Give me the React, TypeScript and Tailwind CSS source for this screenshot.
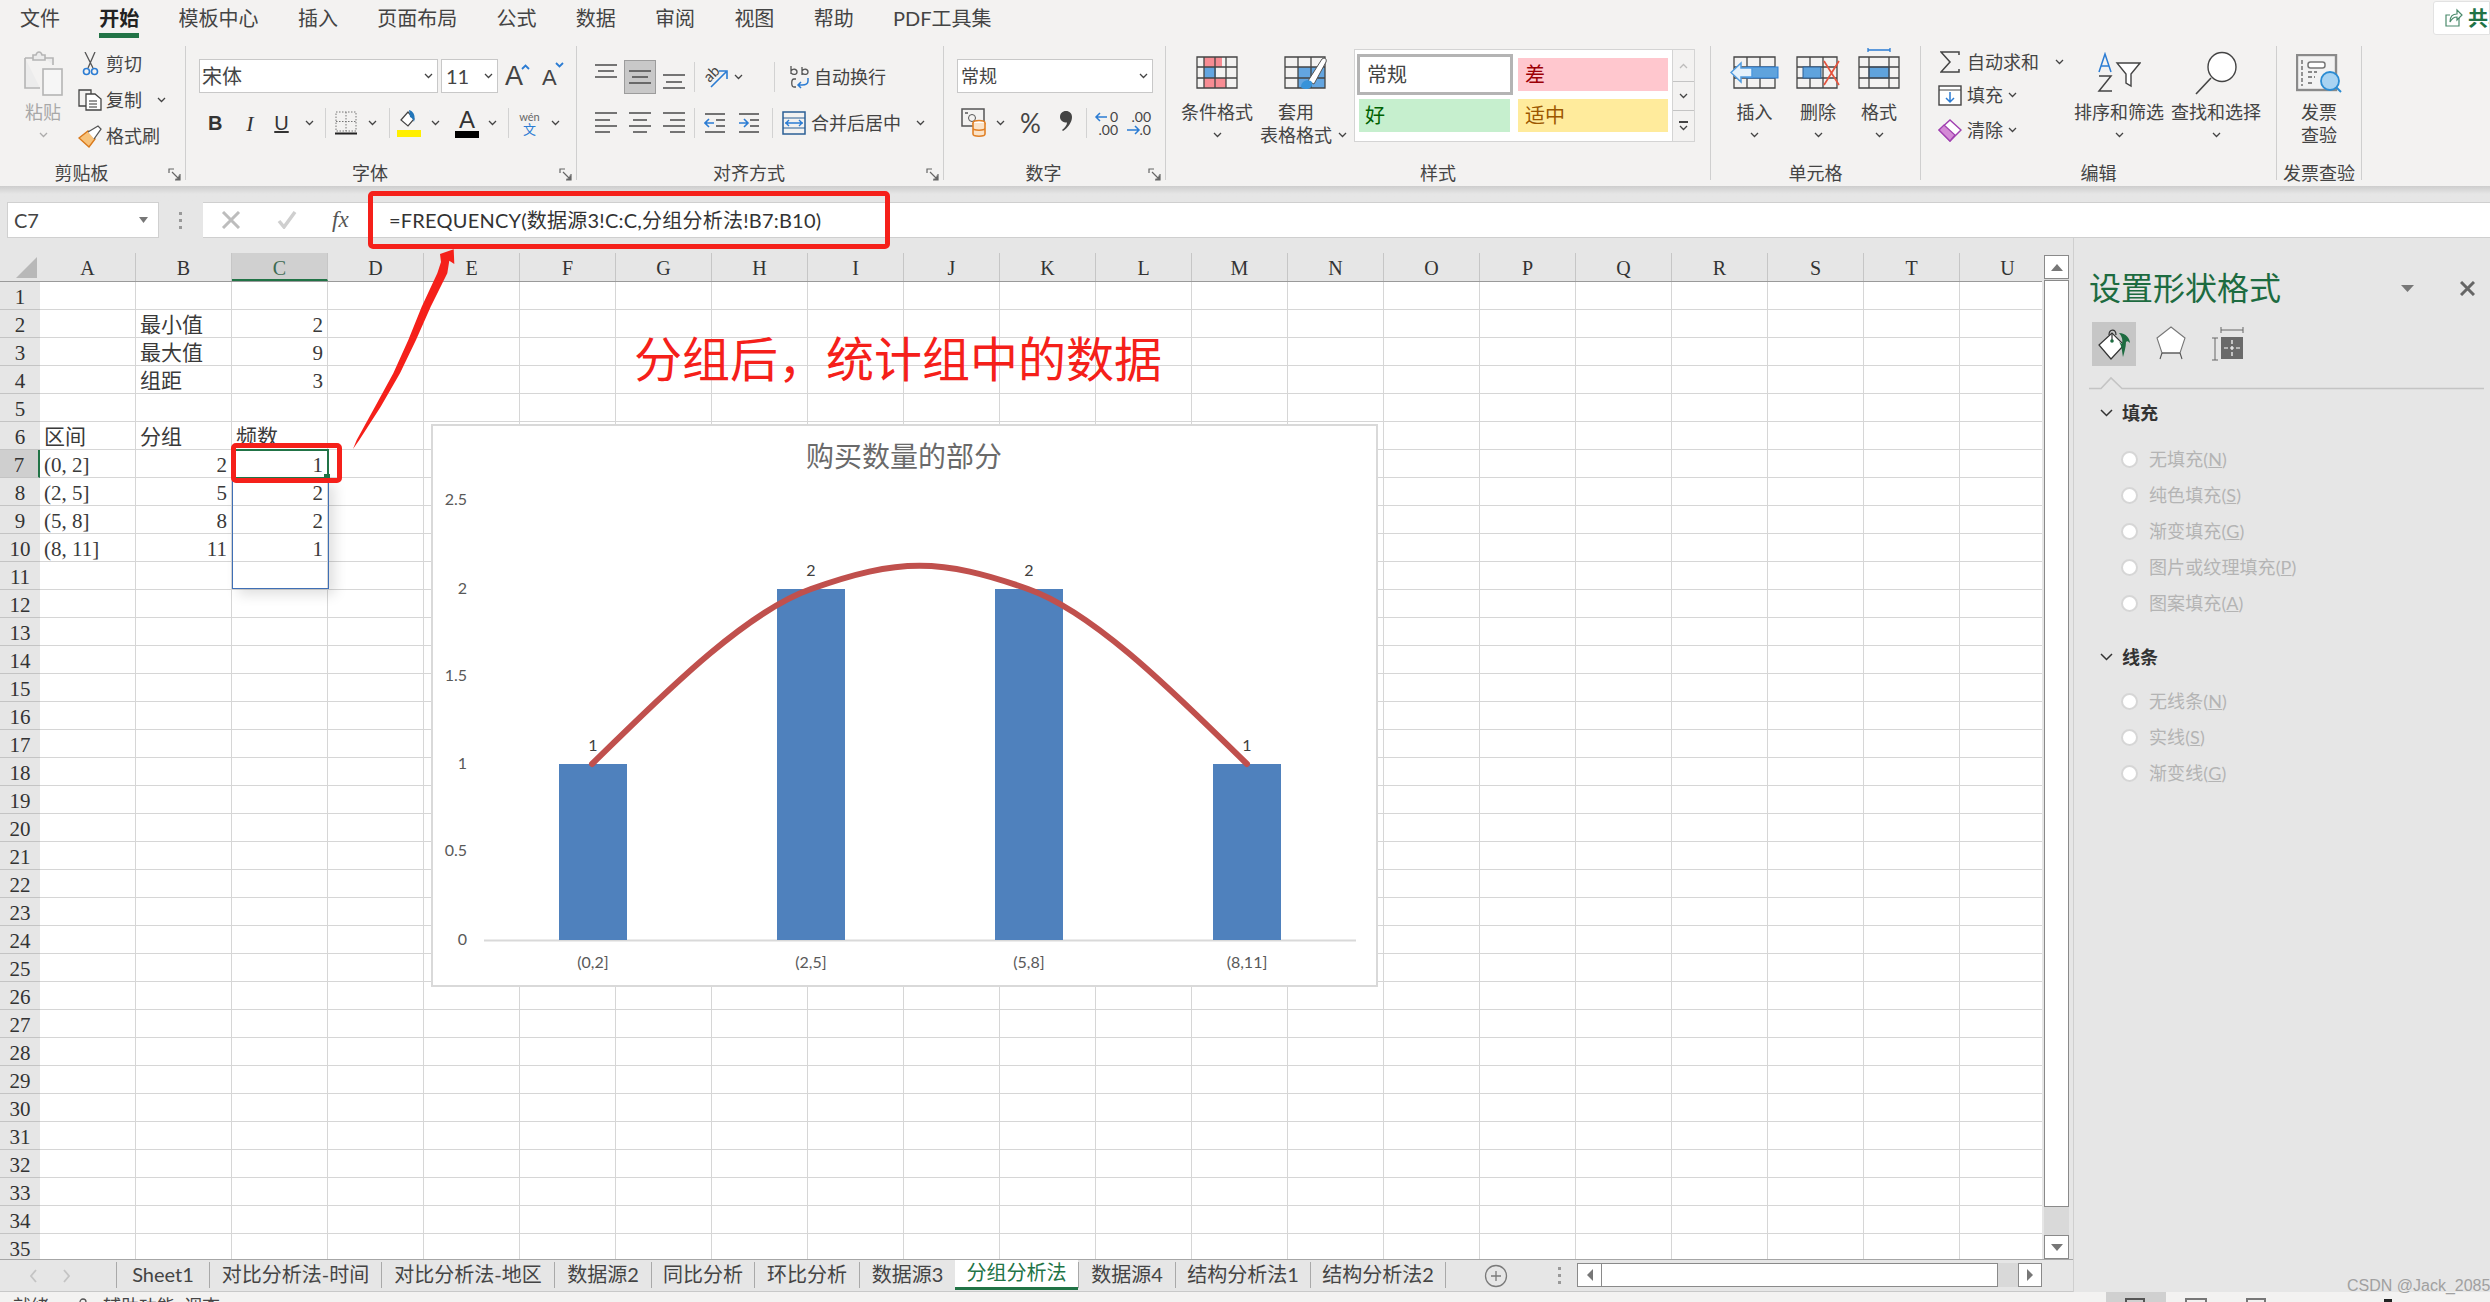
import React from 'react';

const Chev = ({ className = '' }: { className?: string }) => (
  <svg width="9" height="6" viewBox="0 0 9 6" fill="none" stroke="#444" strokeWidth="1.3" className={`shrink-0 ${className}`}><path d="M1 1l3.5 3.5L8 1" /></svg>
);
const Sep = ({ className = '' }: { className?: string }) => <div className={`w-px h-[30px] bg-[#d2d2d2] shrink-0 ${className}`} />;

const Launcher = () => (
  <svg width="13" height="13" viewBox="0 0 13 13" fill="none" stroke="#666" strokeWidth="1.2" className="absolute right-[4px] top-[5px]">
    <path d="M1 5V1h5M12 6v6H7M4 4l7 7M7.5 11H11V7.5" />
  </svg>
);

function Group({ w, label, launcher, children }: { w: string; label: string; launcher?: boolean; children?: React.ReactNode }) {
  return (
    <div className={`${w} h-[134px] border-r border-[#cfcfcf] flex flex-col shrink-0`}>
      <div className="h-[117px] shrink-0">{children}</div>
      <div className={`relative h-[20px] text-center text-[18px] leading-[20px] ${launcher ? 'pr-[22px]' : ''}`}>
        {label}
        {launcher && <Launcher />}
      </div>
    </div>
  );
}

function BigCol({ icon, lines, className = '', pb = 'pb-[11px]', chevInline }: { icon: React.ReactNode; lines: string[]; className?: string; pb?: string; chevInline?: boolean }) {
  return (
    <div className={`flex flex-col items-center shrink-0 ${className}`}>
      <div className={`h-[54px] flex items-end justify-center ${pb}`}>{icon}</div>
      <div className="h-[24px] text-[18px] leading-[24px] whitespace-nowrap">{lines[0]}</div>
      {lines[1] ? (
        <div className="h-[22px] text-[18px] leading-[22px] whitespace-nowrap flex items-center">
          {lines[1]}
          {chevInline && <Chev className="ml-[6px]" />}
        </div>
      ) : (
        <div className="h-[22px] flex items-center"><Chev /></div>
      )}
    </div>
  );
}

const PasteIcon = () => (
  <svg width="42" height="46" viewBox="0 0 42 46" fill="none" stroke="#b5b5b5" strokeWidth="1.6">
    <path d="M3 7h8M23 7h8V14M3 7v30h15" fill="#ececec" />
    <path d="M11 9V4h3c1-4 5-4 6 0h3v5z" fill="#ececec" />
    <rect x="21" y="18" width="19" height="26" fill="#f6f6f6" />
  </svg>
);
const CutIcon = () => (
  <svg width="17" height="24" viewBox="0 0 17 24" fill="none" strokeWidth="1.3">
    <path d="M3 0l8 16M13 0L6 16" stroke="#555" />
    <circle cx="4.5" cy="19.5" r="3" stroke="#2b7cd3" strokeWidth="1.6" />
    <circle cx="12.5" cy="19.5" r="3" stroke="#2b7cd3" strokeWidth="1.6" />
  </svg>
);
const CopyIcon = () => (
  <svg width="25" height="22" viewBox="0 0 25 22" fill="none" stroke="#444" strokeWidth="1.3">
    <path d="M8 17H1V1h12v4" />
    <path d="M8 5h9l6 5v11H8z" fill="#fff" />
    <path d="M11 12h8M11 15h8M11 18h8" stroke="#777" />
  </svg>
);
const BrushIcon = () => (
  <svg width="25" height="23" viewBox="0 0 25 23" fill="none">
    <path d="M1 13l9-7 7 8-6 8z" fill="#f7c27a" stroke="#d9791b" strokeWidth="1.4" />
    <path d="M10 7l10-6 3 3-7 10" fill="#fff" stroke="#555" strokeWidth="1.3" />
  </svg>
);
const BorderIcon = () => (
  <svg width="22" height="24" viewBox="0 0 22 24" fill="none">
    <rect x="1" y="1" width="20" height="19" stroke="#777" strokeDasharray="1.5 1.5" />
    <path d="M11 1v19M1 10.5h20" stroke="#777" strokeDasharray="1.5 1.5" />
    <path d="M0 22.5h22" stroke="#222" strokeWidth="2" />
  </svg>
);
const FillIcon = () => (
  <div className="w-[24px] flex flex-col items-center">
    <svg width="20" height="20" viewBox="0 0 20 20" fill="none">
      <path d="M2 11l7-8 6 7-6 7z" fill="#fff" stroke="#444" strokeWidth="1.2" />
      <path d="M10 1c4 1 7 5 5 12-1-3-2-4-4-5z" fill="#2276b9" />
    </svg>
    <div className="w-[24px] h-[7px] mt-px bg-[#ffef00]" />
  </div>
);
const FontColor = () => (
  <div className="w-[24px] flex flex-col items-center">
    <span className="text-[24px] leading-[22px] text-[#333] font-['Liberation_Sans']">A</span>
    <div className="w-[24px] h-[7px] bg-black" />
  </div>
);
const AL = ({ ys, x }: { ys: number[]; x: number[][] }) => (
  <svg width="22" height="26" viewBox="0 0 22 26" fill="none" stroke="#4a4a4a" strokeWidth="1.5" className="shrink-0">
    {ys.map((y, i) => <path key={i} d={`M${x[i][0]} ${y}H${x[i][1]}`} />)}
  </svg>
);
const V3 = [[0, 22], [3, 19], [0, 22]];
const OrientIcon = () => (
  <svg width="25" height="26" viewBox="0 0 25 26" fill="none" className="shrink-0">
    <text x="1" y="16" fontSize="15" fill="#444" transform="rotate(-45 7 12)">ab</text>
    <path d="M7 23L22 8M15 7h8v8" stroke="#2b7cd3" strokeWidth="1.6" />
  </svg>
);
const WrapIcon = () => (
  <svg width="22" height="24" viewBox="0 0 22 24" fill="none" className="shrink-0">
    <path d="M3 9V1M3 6c2-3 6-2 6 1s-4 3-6 1M14 2v8M14 6c2-3 6-2 6 1s-4 3-6 1" stroke="#555" strokeWidth="1.3" />
    <path d="M8 14h-2c-3 0-3 8 0 8h2" stroke="#555" strokeWidth="1.3" />
    <path d="M20 13v3c0 3-3 4-6 4h-4M13 17l-3 3 3 3" stroke="#2b7cd3" strokeWidth="1.5" />
  </svg>
);
const IndentIcon = ({ flip }: { flip?: boolean }) => (
  <svg width="22" height="22" viewBox="0 0 22 22" fill="none" className="shrink-0">
    <path d="M1 2h20M1 20h20M12 8h9M12 14h9" stroke="#4a4a4a" strokeWidth="1.5" />
    <path d={flip ? 'M1 11h8M6 7l4 4-4 4' : 'M10 11H2M5 7l-4 4 4 4'} stroke="#2b7cd3" strokeWidth="1.6" />
  </svg>
);
const MergeIcon = () => (
  <svg width="24" height="24" viewBox="0 0 24 24" fill="none" className="shrink-0">
    <rect x="1" y="1" width="22" height="22" stroke="#2b5f95" strokeWidth="1.5" />
    <path d="M1 7h22M1 17h22" stroke="#2b5f95" strokeWidth="1.2" />
    <path d="M3 12h18M7 9l-3 3 3 3M17 9l3 3-3 3" stroke="#2b7cd3" strokeWidth="1.4" />
  </svg>
);
const CurrencyIcon = () => (
  <svg width="25" height="30" viewBox="0 0 25 30" fill="none" className="shrink-0">
    <rect x="1" y="1" width="22" height="17" stroke="#555" strokeWidth="1.5" />
    <path d="M4 5h3M16 14h3" stroke="#555" strokeWidth="1.3" />
    <circle cx="11" cy="10" r="3.5" stroke="#555" />
    <ellipse cx="18" cy="15" rx="6" ry="2.5" fill="#fff" stroke="#e08026" strokeWidth="1.6" />
    <path d="M12 15v11c0 3 12 3 12 0V15M12 20c0 3 12 3 12 0" fill="#fbe3c8" stroke="#e08026" strokeWidth="1.6" />
  </svg>
);
const CommaIcon = () => (
  <svg width="12" height="20" viewBox="0 0 12 20" className="shrink-0">
    <path d="M6 0c3.500 0 6 2.500 6 6 0 5-4 11-9 14l-1-1c3-2.500 5-5 5-7.500C3 11.500 0 9.500 0 6c0-3.500 2.500-6 6-6z" fill="#444" />
  </svg>
);
const DecIcon = ({ inc }: { inc?: boolean }) => (
  <div className="relative w-[24px] h-[26px] shrink-0 text-[14px] leading-[13px] text-[#444] font-['Lato',sans-serif]">
    <div className="text-right">{inc ? '0' : '.00'}</div>
    <div className="text-right">{inc ? '.00' : '.0'}</div>
    <svg width="14" height="10" viewBox="0 0 14 10" fill="none" stroke="#2b7cd3" strokeWidth="1.5" className={`absolute left-0 ${inc ? 'top-[2px]' : 'top-[15px]'}`}>
      {inc ? <path d="M13 5H2M6 1L2 5l4 4" /> : <path d="M0 5h11M8 1l4 4-4 4" />}
    </svg>
  </div>
);
const CondIcon = () => (
  <svg width="42" height="33" viewBox="0 0 42 33" fill="none">
    <rect x="8" y="1" width="18" height="10" fill="#f78c93" />
    <rect x="8" y="11" width="12" height="11" fill="#63a5e0" />
    <rect x="8" y="22" width="22" height="10" fill="#f78c93" />
    <path d="M1 1h40v31H1zM8 1v31M19 1v31M30 1v31M1 11h40M1 22h40" stroke="#444" strokeWidth="1.3" />
  </svg>
);
const TableIcon = () => (
  <svg width="44" height="33" viewBox="0 0 44 33" fill="none">
    <rect x="14" y="11" width="27" height="21" fill="#63a5e0" />
    <path d="M1 1h40v31H1zM14 1v31M27 1v31M1 11h40M1 22h40" stroke="#444" strokeWidth="1.3" />
    <path d="M24 25L38 3c3-2 5 0 4 3L30 28z" fill="#fff" stroke="#555" />
    <path d="M17 31c0-6 6-8 10-6 3 3 0 8-4 8-2 0-5 0-6-2z" fill="#3793d9" />
  </svg>
);
const InsertIcon = () => (
  <svg width="49" height="33" viewBox="0 0 49 33" fill="none">
    <path d="M4 1h41v31H4zM17 1v31M30 1v31M4 11h41M4 22h41" stroke="#444" strokeWidth="1.3" />
    <rect x="16" y="11" width="32" height="11" fill="#5fa3dd" stroke="#2b7cd3" />
    <path d="M1 16.500L11 7v5h11v9H11v5z" fill="#e5f1fb" stroke="#4f9be0" strokeWidth="1.5" />
  </svg>
);
const DeleteIcon = () => (
  <svg width="44" height="33" viewBox="0 0 44 33" fill="none">
    <path d="M1 1h40v31H1zM14 1v31M27 1v31M1 11h40M1 22h40" stroke="#444" strokeWidth="1.3" />
    <rect x="7" y="11" width="18" height="11" fill="#5fa3dd" stroke="#2b5f95" />
    <path d="M28 5l15 24M43 5L28 29" stroke="#e5533d" strokeWidth="1.7" />
  </svg>
);
const FormatIcon = () => (
  <svg width="42" height="41" viewBox="0 0 42 41" fill="none">
    <path d="M10 2h22M10 0v4M32 0v4" stroke="#2b7cd3" strokeWidth="1.3" />
    <rect x="11" y="19" width="20" height="11" fill="#5fa3dd" stroke="#2b7cd3" />
    <path d="M1 9h40v31H1zM11 9v31M31 9v31M1 19h40M1 30h40" stroke="#444" strokeWidth="1.3" />
  </svg>
);
const SigmaIcon = () => (
  <svg width="20" height="22" viewBox="0 0 20 22" fill="none" stroke="#444" strokeWidth="1.5"><path d="M19 4V1H1l9 10-9 10h18v-3" /></svg>
);
const FillDown = () => (
  <svg width="24" height="21" viewBox="0 0 24 21" fill="none">
    <rect x="1" y="1" width="22" height="19" fill="#fff" stroke="#444" strokeWidth="1.4" />
    <path d="M1 5h22" stroke="#444" />
    <path d="M12 7v10M8 13l4 4 4-4" stroke="#2b7cd3" strokeWidth="1.5" />
  </svg>
);
const EraseIcon = () => (
  <svg width="24" height="23" viewBox="0 0 24 23" fill="none">
    <path d="M12 1l11 10-11 11L1 11z" fill="#fff" stroke="#a040b0" strokeWidth="1.5" />
    <path d="M6 6l11 10-5 6L1 11z" fill="#d48ad6" stroke="#a040b0" strokeWidth="1.2" />
  </svg>
);
const SortIcon = () => (
  <svg width="44" height="41" viewBox="0 0 44 41" fill="none">
    <path d="M2 20L8 2l6 18M4 14h8" stroke="#2b7cd3" strokeWidth="1.5" />
    <path d="M2 24h12L2 39h13" stroke="#444" strokeWidth="1.5" />
    <path d="M20 11h23l-9 11v12l-5-3v-9z" fill="#fff" stroke="#444" strokeWidth="1.4" />
  </svg>
);
const FindIcon = () => (
  <svg width="44" height="44" viewBox="0 0 44 44" fill="none" stroke="#444" strokeWidth="1.4">
    <ellipse cx="28" cy="16" rx="14" ry="14.500" fill="#fff" />
    <path d="M17 27L2 43" strokeWidth="1.6" />
  </svg>
);
const InvoiceIcon = () => (
  <svg width="46" height="39" viewBox="0 0 46 39" fill="none">
    <rect x="1" y="1" width="39" height="35" fill="#f2f2f2" stroke="#8a8a8a" strokeWidth="2.4" />
    <rect x="12" y="8" width="17" height="6" rx="2.5" fill="#fff" stroke="#777" strokeWidth="1.5" />
    <path d="M6 6v26M12 18h9M12 23h7M12 29h6" stroke="#888" strokeWidth="1.8" strokeDasharray="4 2" />
    <circle cx="34" cy="27" r="9" fill="#a8d3f2" stroke="#2b8cd3" strokeWidth="1.8" />
    <path d="M40 33l5 5" stroke="#2b8cd3" strokeWidth="2" />
  </svg>
);
const ShareIcon = () => (
  <svg width="20" height="20" viewBox="0 0 20 20" fill="none" stroke="#4a8a6c" strokeWidth="1.2" className="shrink-0">
    <path d="M15 10v8H2V7h4" />
    <path d="M6 14c0-6 3-8 7-8V2l5 5-5 5V9c-3 0-5 1-7 5z" fill="#fff" />
  </svg>
);

function Ribbon() {
  return (
    <div className="h-[140px] flex items-start">
      <Group w="w-[186px]" label="剪贴板" launcher>
        <div className="flex">
          <div className="w-[78px] flex flex-col items-center pl-[8px] shrink-0">
            <div className="h-[54px] flex items-end pb-[3px]"><PasteIcon /></div>
            <div className="h-[24px] text-[18px] leading-[24px] text-[#a8a8a8]">粘贴</div>
            <div className="h-[22px] flex items-center"><Chev className="opacity-40" /></div>
          </div>
          <div className="flex flex-col">
            <div className="h-[36px] flex items-center"><div className="w-[28px] pl-[4px] shrink-0"><CutIcon /></div><span className="text-[18px]">剪切</span></div>
            <div className="h-[36px] flex items-center"><div className="w-[28px] shrink-0"><CopyIcon /></div><span className="text-[18px]">复制</span><Chev className="ml-[15px]" /></div>
            <div className="h-[36px] flex items-center"><div className="w-[28px] shrink-0"><BrushIcon /></div><span className="text-[18px]">格式刷</span></div>
          </div>
        </div>
      </Group>

      <Group w="w-[391px]" label="字体" launcher>
        <div className="flex mt-[13px] h-[34px]">
          <div className="ml-[13px] w-[239px] bg-white border border-[#c8c8c8] flex items-center justify-between pl-[2px] pr-[4px] text-[20px]">宋体<Chev /></div>
          <div className="ml-[3px] w-[57px] bg-white border border-[#c8c8c8] flex items-center justify-between pl-[4px] pr-[4px] text-[20px]">11<Chev /></div>
          <div className="ml-[7px] w-[25px] relative text-[27px] leading-[34px] font-['Liberation_Sans'] text-[#444]">
            A
            <svg width="9" height="6" viewBox="0 0 9 6" fill="none" stroke="#2b7cd3" strokeWidth="1.8" className="absolute left-[16px] top-[5px]"><path d="M1 5l3.500-3.500L8 5" /></svg>
          </div>
          <div className="ml-[12px] w-[20px] relative text-[22px] leading-[38px] font-['Liberation_Sans'] text-[#444]">
            A
            <svg width="9" height="6" viewBox="0 0 9 6" fill="none" stroke="#2b7cd3" strokeWidth="1.8" className="absolute left-[13px] top-[3px]"><path d="M1 1l3.500 3.500L8 1" /></svg>
          </div>
        </div>
        <div className="flex items-center mt-[13px] h-[34px]">
          <div className="ml-[22px] w-[14px] text-center font-['Liberation_Sans'] font-bold text-[20px] text-[#333]">B</div>
          <div className="ml-[21px] w-[14px] text-center font-['Liberation_Serif'] italic text-[22px] text-[#333]">I</div>
          <div className="ml-[17px] w-[15px] text-center font-['Liberation_Sans'] underline text-[20px] text-[#333]">U</div>
          <Chev className="ml-[16px]" />
          <Sep className="ml-[11px]" />
          <div className="ml-[9px]"><BorderIcon /></div>
          <Chev className="ml-[11px]" />
          <Sep className="ml-[12px]" />
          <div className="ml-[7px]"><FillIcon /></div>
          <Chev className="ml-[10px]" />
          <div className="ml-[15px]"><FontColor /></div>
          <Chev className="ml-[9px]" />
          <Sep className="ml-[11px]" />
          <div className="ml-[10px] w-[21px] text-center text-[11px] leading-[12px] text-[#666]">wén<div className="text-[13px] leading-[13px] text-[#2b7cd3]">文</div></div>
          <Chev className="ml-[11px]" />
        </div>
      </Group>

      <Group w="w-[367px]" label="对齐方式" launcher>
        <div className="flex items-center mt-[14px] h-[34px]">
          <div className="ml-[18px]"><AL ys={[1, 7, 13]} x={V3} /></div>
          <div className="ml-[7px] w-[32px] h-[34px] bg-[#c8c8c8] border border-[#9c9c9c] flex items-center justify-center"><AL ys={[7, 13, 19]} x={V3} /></div>
          <div className="ml-[7px]"><AL ys={[11, 18, 24]} x={V3} /></div>
          <Sep className="ml-[9px]" />
          <div className="ml-[9px]"><OrientIcon /></div>
          <Chev className="ml-[5px]" />
          <Sep className="ml-[31px]" />
          <div className="ml-[13px]"><WrapIcon /></div>
          <span className="ml-[4px] text-[18px] whitespace-nowrap">自动换行</span>
        </div>
        <div className="flex items-center mt-[12px] h-[34px]">
          <div className="ml-[18px]"><AL ys={[3, 10, 16, 22]} x={[[0, 22], [0, 15], [0, 22], [0, 15]]} /></div>
          <div className="ml-[12px]"><AL ys={[3, 10, 16, 22]} x={[[0, 22], [4, 18], [0, 22], [4, 18]]} /></div>
          <div className="ml-[12px]"><AL ys={[3, 10, 16, 22]} x={[[0, 22], [7, 22], [0, 22], [7, 22]]} /></div>
          <Sep className="ml-[9px]" />
          <div className="ml-[9px]"><IndentIcon /></div>
          <div className="ml-[12px]"><IndentIcon flip /></div>
          <Sep className="ml-[12px]" />
          <div className="ml-[9px]"><MergeIcon /></div>
          <span className="ml-[5px] text-[18px] whitespace-nowrap">合并后居中</span>
          <Chev className="ml-[15px]" />
        </div>
      </Group>

      <Group w="w-[222px]" label="数字" launcher>
        <div className="flex mt-[13px] h-[34px]">
          <div className="ml-[13px] w-[196px] bg-white border border-[#c8c8c8] flex items-center justify-between pl-[3px] pr-[4px] text-[18px]">常规<Chev /></div>
        </div>
        <div className="flex items-center mt-[13px] h-[34px]">
          <div className="ml-[17px]"><CurrencyIcon /></div>
          <Chev className="ml-[10px]" />
          <div className="ml-[15px] w-[23px] text-[26px] font-['Lato'] text-[#444] leading-[34px]">%</div>
          <div className="ml-[17px] w-[11px] -mt-[4px]"><CommaIcon /></div>
          <Sep className="ml-[15px]" />
          <div className="ml-[7px]"><DecIcon inc /></div>
          <div className="ml-[9px]"><DecIcon /></div>
        </div>
      </Group>

      <Group w="w-[545px]" label="样式">
        <div className="flex">
          <BigCol className="ml-[15px] w-[72px]" icon={<CondIcon />} lines={['条件格式']} />
          <div className="ml-[7px] w-[86px] shrink-0 flex flex-col items-start">
            <div className="h-[54px] flex items-end pb-[11px] pl-[24px]"><TableIcon /></div>
            <div className="h-[24px] w-[72px] text-center text-[18px] leading-[24px]">套用</div>
            <div className="h-[22px] text-[18px] leading-[22px] whitespace-nowrap flex items-center">表格格式<Chev className="ml-[6px]" /></div>
          </div>
          <div className="ml-[8px] mt-[3px] w-[341px] h-[93px] border border-[#d4d4d4] bg-white flex shrink-0">
            <div className="w-[318px] pl-[2px] pt-[4px]">
              <div className="flex items-center h-[41px]">
                <div className="w-[156px] h-[41px] border-[3px] border-[#b4b4b4] bg-white pl-[7px] text-[20px] leading-[35px]">常规</div>
                <div className="ml-[5px] w-[150px] h-[33px] bg-[#ffc7ce] text-[#9c0006] pl-[7px] text-[20px] leading-[33px]">差</div>
              </div>
              <div className="flex items-center h-[33px] mt-[4px]">
                <div className="ml-[2px] w-[151px] h-[33px] bg-[#c6efce] text-[#006100] pl-[6px] text-[20px] leading-[33px]">好</div>
                <div className="ml-[8px] w-[150px] h-[33px] bg-[#ffeb9c] text-[#9c5700] pl-[7px] text-[20px] leading-[33px]">适中</div>
              </div>
            </div>
            <div className="ml-[1px] w-[22px] flex flex-col border-l border-[#d4d4d4] bg-[#f3f2f1]">
              <div className="h-[32px] border-b border-[#c4c4c4] flex items-center justify-center"><Chev className="rotate-180 opacity-30" /></div>
              <div className="h-[29px] border-b border-[#c4c4c4] flex items-center justify-center"><Chev /></div>
              <div className="flex-1 flex flex-col items-center justify-center gap-[2px]"><div className="w-[9px] h-[2px] bg-[#444]" /><Chev /></div>
            </div>
          </div>
        </div>
      </Group>

      <Group w="w-[210px]" label="单元格">
        <div className="flex">
          <BigCol className="ml-[19px] w-[49px]" icon={<InsertIcon />} lines={['插入']} />
          <BigCol className="ml-[17px] w-[44px]" icon={<DeleteIcon />} lines={['删除']} />
          <BigCol className="ml-[18px] w-[42px]" icon={<FormatIcon />} lines={['格式']} />
        </div>
      </Group>

      <Group w="w-[356px]" label="编辑">
        <div className="flex">
          <div className="ml-[17px] w-[136px] shrink-0 flex flex-col">
            <div className="h-[32px] flex items-center text-[18px] whitespace-nowrap"><div className="w-[29px] pl-[2px] shrink-0"><SigmaIcon /></div>自动求和<Chev className="ml-[16px]" /></div>
            <div className="h-[34px] flex items-center text-[18px] whitespace-nowrap"><div className="w-[29px] shrink-0"><FillDown /></div>填充<Chev className="ml-[5px]" /></div>
            <div className="h-[36px] flex items-center text-[18px] whitespace-nowrap"><div className="w-[29px] shrink-0"><EraseIcon /></div>清除<Chev className="ml-[5px]" /></div>
          </div>
          <BigCol className="w-[90px]" pb="pb-[7px]" icon={<SortIcon />} lines={['排序和筛选']} />
          <BigCol className="ml-[7px] w-[90px]" pb="pb-[5px]" icon={<FindIcon />} lines={['查找和选择']} />
        </div>
      </Group>

      <Group w="w-[85px]" label="发票查验">
        <BigCol className="w-full" pb="pb-[7px]" icon={<InvoiceIcon />} lines={['发票', '查验']} />
      </Group>
    </div>
  );
}

const TABS = ['文件', '开始', '模板中心', '插入', '页面布局', '公式', '数据', '审阅', '视图', '帮助', 'PDF工具集'];

function TopTabs() {
  return (
    <div className="h-[46px] flex">
      <div className="flex gap-[39.3px] pl-[20px] text-[20px] leading-[36px]">
        {TABS.map((t) => (
          <div key={t} className={`relative h-[38px] whitespace-nowrap ${t === '开始' ? 'font-bold text-[#222]' : ''}`}>
            {t}
            {t === '开始' && <div className="absolute left-0 right-0 top-[33px] h-[5px] bg-[#217346]" />}
          </div>
        ))}
      </div>
      <div className="ml-auto mt-[1px] h-[34px] w-[57px] bg-white border border-[#e2e2e2] rounded-l-[3px] flex items-center pl-[10px] overflow-hidden">
        <ShareIcon />
        <span className="ml-[4px] text-[20px] font-bold text-[#217346] whitespace-nowrap">共享</span>
      </div>
    </div>
  );
}

function FormulaBar() {
  return (
    <>
      <div className="h-[16px] bg-linear-to-b from-[#cdcdcd] via-[#e6e6e6] to-[#e6e6e6]" />
      <div className="h-[36px] flex bg-[#e6e6e6]">
        <div className="ml-[7px] w-[152px] bg-white border border-[#d0d0d0] flex items-center justify-between pl-[6px] pr-[10px] text-[20px]">
          C7
          <svg width="9" height="6" viewBox="0 0 9 6"><path d="M0 0h9L4.500 6z" fill="#777" /></svg>
        </div>
        <div className="ml-[20px] w-[4px] flex flex-col justify-center gap-[4px]">
          <div className="w-[3px] h-[3px] bg-[#999]" /><div className="w-[3px] h-[3px] bg-[#999]" /><div className="w-[3px] h-[3px] bg-[#999]" />
        </div>
        <div className="ml-[20px] flex-1 bg-white border-y border-[#cfcfcf] flex items-center">
          <svg width="20" height="18" viewBox="0 0 20 18" stroke="#bdbdbd" strokeWidth="3" className="ml-[18px] shrink-0"><path d="M2 1l16 16M18 1L2 17" /></svg>
          <svg width="20" height="18" viewBox="0 0 20 18" fill="none" stroke="#cfcfcf" strokeWidth="3.5" className="ml-[36px] shrink-0"><path d="M2 10l5 6L18 1" /></svg>
          <span className="ml-[35px] w-[24px] font-['Liberation_Serif'] italic text-[23px] text-[#555]">fx</span>
          <span className="ml-[33px] text-[20px] tracking-[0.22px] text-[#333] whitespace-nowrap">=FREQUENCY(数据源3!C:C,分组分析法!B7:B10)</span>
        </div>
      </div>
    </>
  );
}

const COLS = 'ABCDEFGHIJKLMNOPQRSTU'.split('');
const ROWS = Array.from({ length: 35 }, (_, i) => i + 1);
const CELLS: Record<string, [string, boolean?]> = {
  B2: ['最小值'], C2: ['2', true], B3: ['最大值'], C3: ['9', true], B4: ['组距'], C4: ['3', true],
  A6: ['区间'], B6: ['分组'], C6: ['频数'],
  A7: ['(0, 2]'], B7: ['2', true], C7: ['1', true],
  A8: ['(2, 5]'], B8: ['5', true], C8: ['2', true],
  A9: ['(5, 8]'], B9: ['8', true], C9: ['2', true],
  A10: ['(8, 11]'], B10: ['11', true], C10: ['1', true],
};

function Grid() {
  return (
    <div className="w-[2042px] h-[1021px] overflow-hidden shrink-0 font-['Liberation_Serif','Noto_Sans_CJK_SC',serif]">
      <div className="h-[44px] flex items-end bg-[#e6e6e6] border-b border-[#9a9a9a]">
        <div className="w-[40px] h-[28px] shrink-0 flex items-end justify-end pr-[3px] pb-[3px]">
          <svg width="21" height="21" viewBox="0 0 21 21"><path d="M21 0v21H0z" fill="#b8b8b8" /></svg>
        </div>
        {COLS.map((c) => (
          <div key={c} className={`w-[96px] shrink-0 h-[28px] border-r border-[#c6c6c6] text-center text-[20px] leading-[31px] ${c === 'C' ? 'bg-[#d0d0d0] border-b-2 border-b-[#217346] text-[#3d6b52]' : 'text-[#333]'}`}>{c}</div>
        ))}
      </div>
      {ROWS.map((r) => (
        <div key={r} className="flex h-[28px]">
          <div className={`w-[40px] shrink-0 h-[28px] border-b border-[#c4c4c4] text-center text-[21px] leading-[30px] text-[#333] ${r === 7 ? 'bg-[#cfcfcf] border-r-2 border-r-[#217346] text-[#3d6b52]' : 'bg-[#e6e6e6]'}`}>{r}</div>
          {COLS.map((c) => {
            const v = CELLS[`${c}${r}`];
            return (
              <div key={c} className={`w-[96px] shrink-0 h-[28px] border-r border-b border-[#d6d6d6] bg-white px-[4px] text-[21px] leading-[30px] text-[#3a3a3a] whitespace-nowrap overflow-hidden ${v && v[1] ? 'text-right' : 'text-left'}`}>{v ? v[0] : ''}</div>
            );
          })}
        </div>
      ))}
    </div>
  );
}

function VScroll() {
  return (
    <div className="w-[31px] h-[1021px] shrink-0 bg-[#e6e6e6] pl-[2px] pt-[17px] flex flex-col">
      <div className="w-[26px] bg-[#d9d9d9] flex flex-col h-[1005px] border-r border-[#e6e6e6]">
        <div className="h-[24px] bg-white border border-[#8a8a8a] flex items-center justify-center"><svg width="12" height="7" viewBox="0 0 12 7"><path d="M6 0l6 7H0z" fill="#777" /></svg></div>
        <div className="h-[927px] mt-px bg-white border border-[#8a8a8a]" />
        <div className="flex-1" />
        <div className="h-[24px] bg-white border border-[#8a8a8a] flex items-center justify-center"><svg width="12" height="7" viewBox="0 0 12 7"><path d="M6 7L0 0h12z" fill="#777" /></svg></div>
      </div>
    </div>
  );
}

const SHEETS: [string, string][] = [
  ['Sheet1', 'w-[93px]'], ['对比分析法-时间', 'w-[172px]'], ['对比分析法-地区', 'w-[173px]'], ['数据源2', 'w-[97px]'],
  ['同比分析', 'w-[103px]'], ['环比分析', 'w-[105px]'], ['数据源3', 'w-[96px]'], ['分组分析法', 'w-[123px]'],
  ['数据源4', 'w-[97px]'], ['结构分析法1', 'w-[135px]'], ['结构分析法2', 'w-[135px]'],
];

function SheetTabs() {
  return (
    <div className="h-[33px] flex bg-[#e6e6e6] border-t border-[#a6a6a6] border-b border-b-[#c8c8c8]">
      <div className="w-[116px] shrink-0 flex items-center pl-[30px] gap-[26px]">
        <svg width="7" height="14" viewBox="0 0 7 14" fill="none" stroke="#c4c4c4" strokeWidth="1.8"><path d="M6 1L1 7l5 6" /></svg>
        <svg width="7" height="14" viewBox="0 0 7 14" fill="none" stroke="#c4c4c4" strokeWidth="1.8"><path d="M1 1l5 6-5 6" /></svg>
      </div>
      {SHEETS.map(([t, w]) => {
        const active = t === '分组分析法';
        return (
          <div key={t} className={`${w} shrink-0 text-center text-[20px] leading-[24px] whitespace-nowrap ${active ? 'h-[30px] bg-white border-b-[3px] border-[#217346] text-[#217346]' : 'text-[#444] border-l border-l-[#a9a9a9] mt-[2px] h-[26px]'}`}>{t}</div>
        );
      })}
      <div className="w-px h-[26px] mt-[2px] bg-[#a9a9a9] shrink-0" />
      <svg width="24" height="24" viewBox="0 0 24 24" fill="none" stroke="#7a7a7a" className="ml-[38px] mt-[4px] shrink-0"><circle cx="12" cy="12" r="10.500" strokeWidth="1.3" /><path d="M12 7v10M7 12h10" strokeWidth="1.3" /></svg>
      <div className="ml-[50px] w-[3px] flex flex-col justify-center gap-[4px]">
        <div className="w-[3px] h-[3px] bg-[#999]" /><div className="w-[3px] h-[3px] bg-[#999]" /><div className="w-[3px] h-[3px] bg-[#999]" />
      </div>
      <div className="ml-[16px] mt-[3px] h-[24px] w-[465px] flex bg-[#d9d9d9] shrink-0">
        <div className="w-[25px] bg-white border border-[#8a8a8a] flex items-center justify-center"><svg width="6" height="12" viewBox="0 0 6 12"><path d="M0 6l6-6v12z" fill="#777" /></svg></div>
        <div className="w-[396px] bg-white border-y border-r border-[#8a8a8a]" />
        <div className="ml-auto w-[24px] bg-white border border-[#8a8a8a] flex items-center justify-center"><svg width="6" height="12" viewBox="0 0 6 12"><path d="M6 6L0 0v12z" fill="#777" /></svg></div>
      </div>
    </div>
  );
}

function Radio({ label, k }: { label: string; k: string }) {
  return (
    <div className="h-[36px] flex items-center pl-[47px] text-[18px] text-[#b4b4b4] whitespace-nowrap">
      <div className="w-[17px] h-[17px] rounded-full bg-white border-2 border-[#d6d6d6] shrink-0" />
      <span className="ml-[11px] tracking-[0.1px]">{label}(<u>{k}</u>)</span>
    </div>
  );
}

function SectionHead({ t, className = '' }: { t: string; className?: string }) {
  return (
    <div className={`h-[26px] flex items-center pl-[26px] ${className}`}>
      <svg width="13" height="8" viewBox="0 0 13 8" fill="none" stroke="#333" strokeWidth="1.5"><path d="M1 1l5.500 5.500L12 1" /></svg>
      <span className="ml-[9px] text-[18px] font-bold text-[#333]">{t}</span>
    </div>
  );
}

function Pane() {
  return (
    <div className="w-[417px] shrink-0 h-[1054px] border-l border-[#cfcfcf] bg-[#e6e6e6] pt-[30px]">
      <div className="h-[40px] flex items-center pl-[15px]">
        <span className="text-[32px] leading-[40px] text-[#1d6b40] whitespace-nowrap">设置形状格式</span>
        <svg width="13" height="7" viewBox="0 0 13 7" className="ml-[120px]"><path d="M0 0h13L6.500 7z" fill="#777" /></svg>
        <svg width="15" height="15" viewBox="0 0 15 15" stroke="#666" strokeWidth="3" className="ml-[46px]"><path d="M1 1l13 13M14 1L1 14" /></svg>
      </div>
      <div className="mt-[14px] h-[44px] flex items-center ml-[18px]">
        <div className="w-[44px] h-[44px] bg-[#c6c6c6] flex items-center justify-center">
          <svg width="34" height="32" viewBox="0 0 34 32" fill="none">
            <path d="M2 17L15 5l12 12-13 14z" fill="#fff" stroke="#333" strokeWidth="1.2" />
            <path d="M12 7c0-6 7-7 7 0M15 6v7" stroke="#333" strokeWidth="1.2" />
            <circle cx="15" cy="13" r="1.800" fill="#1d6b40" />
            <path d="M22 5c7 0 11 6 11 10-2-2-3-2-4-1 0 5-2 11-3 15-1-5-1-11-4-15l3 2c1-4 0-8-3-11z" fill="#1d6b40" />
          </svg>
        </div>
        <svg width="32" height="36" viewBox="0 0 32 36" fill="none" className="ml-[19px]">
          <path d="M16 1l14 11-5 15H7L2 12z" fill="#fff" stroke="#777" strokeWidth="1.1" />
          <path d="M7 27l-2 6M25 27l2 6M7 27h18" stroke="#555" strokeWidth="1.1" />
        </svg>
        <svg width="34" height="34" viewBox="0 0 34 34" fill="none" className="ml-[24px]">
          <path d="M10 3h22M10 0v6M32 0v6M4 11v22M1 11h6M1 33h6" stroke="#666" strokeWidth="1" />
          <rect x="10" y="10" width="22" height="22" fill="#6a6a6a" />
          <path d="M21 13v16M13 21h16" stroke="#fff" strokeWidth="1.2" strokeDasharray="4 2" />
        </svg>
      </div>
      <svg width="395" height="14" viewBox="0 0 395 14" fill="none" stroke="#c4c4c4" strokeWidth="1.6" className="ml-[15px] mt-[10px]">
        <path d="M0 12.500h12L22 2l11 10.500h362" />
      </svg>
      <SectionHead t="填充" className="mt-[10px]" />
      <div className="mt-[15px]">
        <Radio label="无填充" k="N" />
        <Radio label="纯色填充" k="S" />
        <Radio label="渐变填充" k="G" />
        <Radio label="图片或纹理填充" k="P" />
        <Radio label="图案填充" k="A" />
      </div>
      <SectionHead t="线条" className="mt-[23px]" />
      <div className="mt-[13px]">
        <Radio label="无线条" k="N" />
        <Radio label="实线" k="S" />
        <Radio label="渐变线" k="G" />
      </div>
    </div>
  );
}

function Chart() {
  const yt: [string, number][] = [['2.5', 500], ['2', 589], ['1.5', 676], ['1', 764], ['0.5', 851], ['0', 940]];
  const bars: [number, number, string, string][] = [
    [559, 764, '1', '(0,2]'], [777, 589, '2', '(2,5]'], [995, 589, '2', '(5,8]'], [1213, 764, '1', '(8,11]'],
  ];
  return (
    <div className="absolute left-[431px] top-[424px] w-[947px] h-[563px] bg-white border-2 border-[#d9d9d9]">
      <svg width="943" height="559" viewBox="433 426 943 559" className="font-['Lato','Noto_Sans_CJK_SC',sans-serif]">
        <text x="904" y="467" textAnchor="middle" fontSize="28" fill="#6a6a6a">购买数量的部分</text>
        {yt.map(([t, y]) => <text key={t} x="467" y={y + 5} textAnchor="end" fontSize="16" fill="#595959">{t}</text>)}
        <path d="M484 940.500H1356" stroke="#d9d9d9" strokeWidth="2" />
        {bars.map(([x, y, v, l]) => (
          <g key={x}>
            <rect x={x} y={y} width="68" height={940 - y} fill="#4f81bd" />
            <text x={x + 34} y={y - 13} textAnchor="middle" fontSize="16" fill="#404040">{v}</text>
            <text x={x + 34} y="968" textAnchor="middle" fontSize="16" fill="#595959">{l}</text>
          </g>
        ))}
        <path d="M592 764C650 708 740 614 811 589C898 558 941 558 1028 589C1099 614 1189 708 1247 764" fill="none" stroke="#c0504d" strokeWidth="6" strokeLinecap="round" />
      </svg>
    </div>
  );
}

export default function App() {
  return (
    <div className="relative w-[2490px] h-[1302px] overflow-hidden bg-[#f3f2f1] text-[#444] font-['Lato','Noto_Sans_CJK_SC',sans-serif]">
      <TopTabs />
      <Ribbon />
      <FormulaBar />
      <div className="flex h-[1054px]">
        <div className="w-[2073px] shrink-0 flex flex-col">
          <div className="flex h-[1021px]">
            <Grid />
            <VScroll />
          </div>
          <SheetTabs />
        </div>
        <Pane />
      </div>
      <div className="h-[10px] flex overflow-hidden pt-[4px] text-[18px] leading-[20px] text-[#444] whitespace-nowrap">
        <span className="ml-[13px]">就绪</span>
        <svg width="16" height="16" viewBox="0 0 16 16" fill="none" stroke="#555" strokeWidth="1.3" className="ml-[26px] mt-[2px] shrink-0"><circle cx="8" cy="4" r="3" /><path d="M2 10h12" /></svg>
        <span className="ml-[12px]">辅助功能: 调查</span>
      </div>

      <Chart />

      <div className="absolute left-[232px] top-[478px] w-[97px] h-[111px] border-[1.5px] border-[#3f6fb5] shadow-[6px_6px_12px_rgba(0,0,0,0.12)]" />
      <div className="absolute left-[232px] top-[449px] w-[97px] h-[30px] border-2 border-[#217346]">
        <div className="absolute -right-[3px] -bottom-[3px] w-[6px] h-[6px] bg-[#217346]" />
      </div>

      <div className="absolute left-[231px] top-[443px] w-[111px] h-[40px] border-[5px] border-[#f5201a] rounded-[5px]" />
      <div className="absolute left-[368px] top-[191px] w-[522px] h-[58px] border-[5px] border-[#f5201a] rounded-[5px]" />
      <svg width="130" height="215" viewBox="340 245 130 215" className="absolute left-[340px] top-[245px]">
        <path d="M353 449L356.700 440L375 406.700L393.300 373.300L408.300 340L421.700 306.700L437.300 273.300L441 262L440 254L453.700 249.300L454.300 264L449.300 260.700L447.300 273.300L430.700 306.700L416 340L400 373.300L380.700 406.700L359.300 440Z" fill="#f5201a" />
      </svg>
      <div className="absolute left-[634px] top-[326px] text-[48px] leading-[66px] text-[#f5201a] whitespace-nowrap">分组后，统计组中的数据</div>

      <div className="absolute left-[2106px] top-[1292px] w-[60px] h-[10px] bg-[#d0d0d0]" />
      <div className="absolute left-[2125px] top-[1298px] w-[20px] h-[4px] border-t-2 border-x-2 border-[#555]" />
      <div className="absolute left-[2185px] top-[1298px] w-[22px] h-[4px] border-t-2 border-x-2 border-[#777]" />
      <div className="absolute left-[2246px] top-[1298px] w-[20px] h-[4px] border-t-2 border-x-2 border-[#777]" />
      <div className="absolute left-[2384px] top-[1299px] w-[8px] h-[3px] bg-[#222]" />
      <div className="absolute left-[2347px] top-[1276px] text-[16px] leading-[20px] text-[#a0a0a0] whitespace-nowrap font-['Liberation_Sans']">CSDN @Jack_2085</div>
    </div>
  );
}
